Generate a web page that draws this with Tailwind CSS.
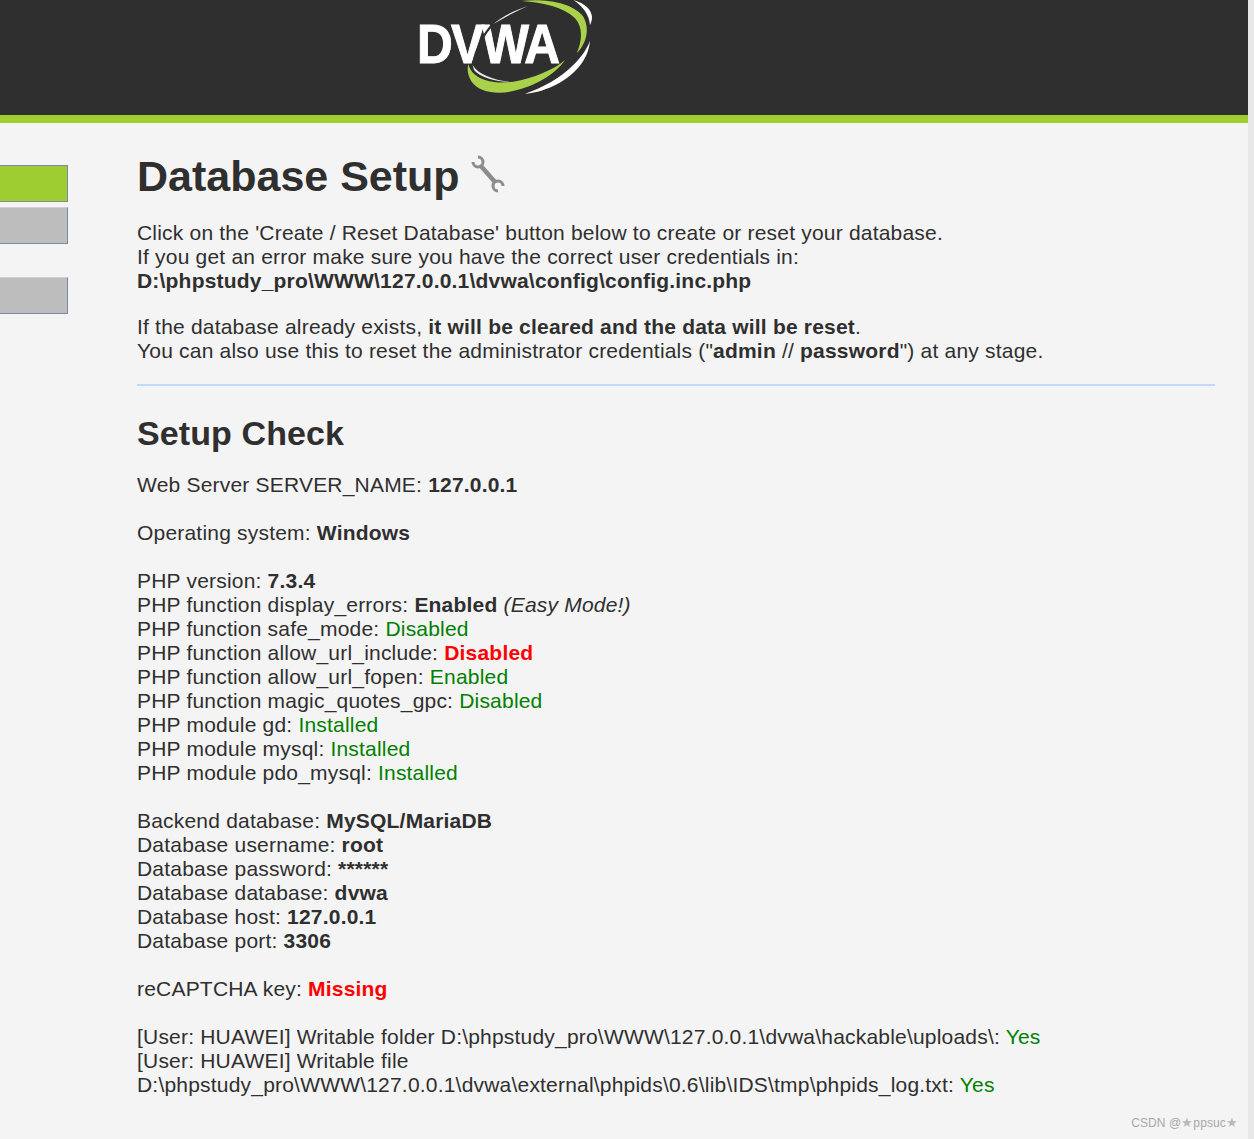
<!DOCTYPE html>
<html lang="en">
    <head>
        <meta charset="utf-8">
        <script src="https://cdn.jsdelivr.net/npm/@tailwindcss/browser@4"></script>
        <title>Setup :: Damn Vulnerable Web Application</title>
    </head>
    <body class="relative h-[1139px] overflow-hidden bg-[#e8e8e8] font-['Liberation_Sans',Arial,sans-serif] text-[21px] leading-[24px] tracking-[0.2px] text-[#2f2f2f]">
        <div class="w-[1248px] h-full bg-[#f4f4f4]">
            <!-- Header -->
            <div class="h-[123px] bg-[#2f2f2f] border-b-[8px] border-[#a1ce2f] relative">
                <div class="absolute left-[400px] top-0 w-[210px] h-[115px] overflow-hidden">
                    <svg class="absolute inset-0" width="210" height="125" viewBox="0 0 630 375">
                        <path fill="#a9d24a" d="M365 3C440 -5 520 10 550 50C570 85 560 130 530 160C548 120 548 80 525 55C490 20 430 8 365 3Z"/>
                        <path fill="#a9d24a" d="M205 192C215 235 270 255 340 245C400 235 460 210 495 180C465 225 400 260 340 273C290 285 235 275 215 245C205 230 200 210 205 192Z"/>
                        <path fill="#fff" d="M520 0C555 10 575 30 576 50C576 60 574 68 570 75C568 45 550 20 520 0Z"/>
                        <path fill="#fff" d="M570 122C566 180 520 230 460 258C430 272 400 280 375 281C430 262 480 235 520 195C545 170 562 145 570 122Z"/>
                        <path fill="#e8e8e8" d="M385 18C345 30 305 50 280 72C310 55 345 35 385 18Z"/>
                        <path fill="#e8e8e8" d="M218 195C235 225 290 245 350 247C300 248 240 235 222 210Z"/>
                    </svg>
                    <span class="absolute left-[17px] top-[16px] origin-left scale-x-[0.9] text-[55px] leading-[56px] font-bold tracking-[-2px] text-white [-webkit-text-stroke:1px_white]">DVWA</span>
                    <svg class="absolute inset-0" width="210" height="125" viewBox="0 0 630 375">
                        <path d="M280 72C250 100 228 150 218 195" stroke="#2f2f2f" stroke-width="7" fill="none"/>
                    </svg>
                </div>
            </div>

            <div class="flex">
                <!-- Side menu -->
                <div class="w-[68px] pt-[42px] shrink-0">
                    <div class="h-[37px] bg-[#9dcd30] border border-l-0 border-[#7d8aa0]"></div>
                    <div class="h-[37px] mt-[5px] bg-[#bdbdbd] border-r border-b border-[#7d8aa0] border-t border-t-[#d0d0d0]"></div>
                    <div class="h-[37px] mt-[33px] bg-[#bdbdbd] border-r border-b border-[#7d8aa0] border-t border-t-[#d0d0d0]"></div>
                </div>

                <!-- Body -->
                <div class="ml-[69px] w-[1078px] relative">
                    <h1 class="mt-[25px] h-[56px] flex items-center text-[43px] leading-[56px] tracking-normal font-bold">
                        Database Setup
                        <svg class="ml-[2px] mt-[-2px] blur-[0.5px]" width="54" height="50" viewBox="0 0 54 50" fill="none" stroke="#8c8c8c">
                            <path d="M18 15L33 32" stroke-width="4.5"/>
                            <path d="M11 12A5 5 0 1 0 16 7" stroke-width="3"/>
                            <path d="M41 36A5 5 0 1 0 36 41" stroke-width="3"/>
                        </svg>
                    </h1>
                    <p class="mt-[17px]">
                        Click on the 'Create / Reset Database' button below to create or reset your database.<br>
                        If you get an error make sure you have the correct user credentials in:<br>
                        <b>D:\phpstudy_pro\WWW\127.0.0.1\dvwa\config\config.inc.php</b>
                    </p>
                    <p class="mt-[22px]">
                        If the database already exists, <b>it will be cleared and the data will be reset</b>.<br>
                        You can also use this to reset the administrator credentials ("<b>admin</b> // <b>password</b>") at any stage.
                    </p>
                    <hr class="mt-[21px] border-0 h-[2px] bg-[#c3d9fb]">
                    <h2 class="mt-[26px] text-[34px] leading-[42px] tracking-[0.1px] font-bold">Setup Check</h2>

                    <p class="mt-[19px]">Web Server SERVER_NAME: <b>127.0.0.1</b></p>
                    <p class="mt-[24px]">Operating system: <b>Windows</b></p>
                    <p class="mt-[24px]">
                        PHP version: <b>7.3.4</b><br>
                        PHP function display_errors: <b>Enabled</b> <i>(Easy Mode!)</i><br>
                        PHP function safe_mode: <span class="text-[#008000]">Disabled</span><br>
                        PHP function allow_url_include: <b class="text-[#f00]">Disabled</b><br>
                        PHP function allow_url_fopen: <span class="text-[#008000]">Enabled</span><br>
                        PHP function magic_quotes_gpc: <span class="text-[#008000]">Disabled</span><br>
                        PHP module gd: <span class="text-[#008000]">Installed</span><br>
                        PHP module mysql: <span class="text-[#008000]">Installed</span><br>
                        PHP module pdo_mysql: <span class="text-[#008000]">Installed</span>
                    </p>
                    <p class="mt-[24px]">
                        Backend database: <b>MySQL/MariaDB</b><br>
                        Database username: <b>root</b><br>
                        Database password: <b>******</b><br>
                        Database database: <b>dvwa</b><br>
                        Database host: <b>127.0.0.1</b><br>
                        Database port: <b>3306</b>
                    </p>
                    <p class="mt-[24px]">reCAPTCHA key: <b class="text-[#f00]">Missing</b></p>
                    <p class="mt-[24px]">
                        [User: HUAWEI] Writable folder D:\phpstudy_pro\WWW\127.0.0.1\dvwa\hackable\uploads\: <span class="text-[#008000]">Yes</span><br>
                        [User: HUAWEI] Writable file<br>
                        D:\phpstudy_pro\WWW\127.0.0.1\dvwa\external\phpids\0.6\lib\IDS\tmp\phpids_log.txt: <span class="text-[#008000]">Yes</span>
                    </p>
                </div>
            </div>
        </div>
        <!-- watermark -->
        <div class="absolute right-[16px] top-[1115px] text-[12px] leading-[16px] text-[#a8a8a8] tracking-[0.1px]">CSDN @<span class="text-[13px] text-[#b8b8b8]">★</span>ppsuc<span class="text-[13px] text-[#b8b8b8]">★</span></div>
    </body>
</html>
